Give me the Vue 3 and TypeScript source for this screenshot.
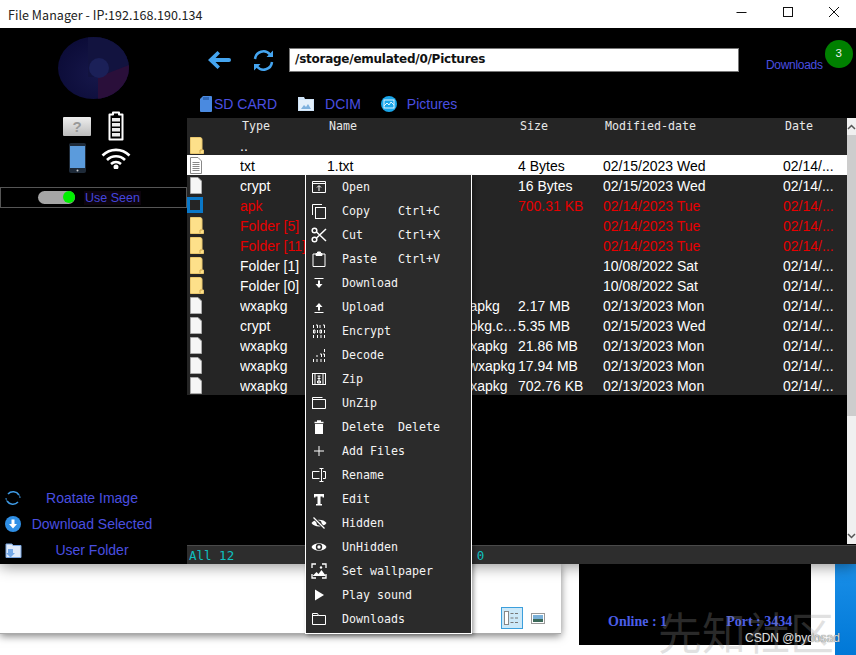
<script setup lang="ts">
interface Row { type: string; name: string; size: string; mod: string; icon: string; red?: boolean; sel?: boolean }
const rows: Row[] = [
  { type: '..', name: '', size: '', mod: '', icon: 'folder' },
  { type: 'txt', name: '1.txt', size: '4 Bytes', mod: '02/15/2023 Wed', icon: 'text', sel: true },
  { type: 'crypt', name: '1.txt.crypt', size: '16 Bytes', mod: '02/15/2023 Wed', icon: 'file' },
  { type: 'apk', name: 'base.apk', size: '700.31 KB', mod: '02/14/2023 Tue', icon: 'apk', red: true },
  { type: 'Folder [5]', name: 'wxapkg', size: '', mod: '02/14/2023 Tue', icon: 'folder', red: true },
  { type: 'Folder [11]', name: 'crypt', size: '', mod: '02/14/2023 Tue', icon: 'folder', red: true },
  { type: 'Folder [1]', name: 'Camera', size: '', mod: '10/08/2022 Sat', icon: 'folder' },
  { type: 'Folder [0]', name: 'Screenshots', size: '', mod: '10/08/2022 Sat', icon: 'folder' },
  { type: 'wxapkg', name: '_-18539298320_19.wxapkg', size: '2.17 MB', mod: '02/13/2023 Mon', icon: 'file' },
  { type: 'crypt', name: '_-1853929832_19.wxapkg.crypt', size: '5.35 MB', mod: '02/15/2023 Wed', icon: 'file' },
  { type: 'wxapkg', name: '_-185392983212_19.wxapkg', size: '21.86 MB', mod: '02/13/2023 Mon', icon: 'file' },
  { type: 'wxapkg', name: '_-1853929832123_19.wxapkg', size: '17.94 MB', mod: '02/13/2023 Mon', icon: 'file' },
  { type: 'wxapkg', name: '_-185392983245_19.wxapkg', size: '702.76 KB', mod: '02/13/2023 Mon', icon: 'file' },
]
const menu: { label: string; key?: string; icon: string }[] = [
  { label: 'Open', icon: 'open' },
  { label: 'Copy', key: 'Ctrl+C', icon: 'copy' },
  { label: 'Cut', key: 'Ctrl+X', icon: 'cut' },
  { label: 'Paste', key: 'Ctrl+V', icon: 'paste' },
  { label: 'Download', icon: 'download' },
  { label: 'Upload', icon: 'upload' },
  { label: 'Encrypt', icon: 'encrypt' },
  { label: 'Decode', icon: 'decode' },
  { label: 'Zip', icon: 'zip' },
  { label: 'UnZip', icon: 'unzip' },
  { label: 'Delete', key: 'Delete', icon: 'delete' },
  { label: 'Add Files', icon: 'add' },
  { label: 'Rename', icon: 'rename' },
  { label: 'Edit', icon: 'edit' },
  { label: 'Hidden', icon: 'hidden' },
  { label: 'UnHidden', icon: 'unhidden' },
  { label: 'Set wallpaper', icon: 'wallpaper' },
  { label: 'Play sound', icon: 'play' },
  { label: 'Downloads', icon: 'folderOutline' },
]
</script>

<template>
  <div class="desk">
    <div class="window">
      <div class="titlebar">
        <span class="title">File Manager - IP:192.168.190.134</span>
        <div class="controls">
          <svg width="46" height="28" viewBox="0 0 46 28"><path d="M17.500 12.500h10" stroke="#111" fill="none" /></svg>
          <svg width="46" height="28" viewBox="0 0 46 28"><rect x="18.500" y="7.500" width="9" height="9" stroke="#111" fill="none" /></svg>
          <svg width="46" height="28" viewBox="0 0 46 28"><path d="M18 7l10 10M28 7l-10 10" stroke="#111" fill="none" /></svg>
        </div>
      </div>
      <div class="body">
        <aside class="side">
          <svg class="logo" width="71" height="62" viewBox="0 0 71 62">
            <defs>
              <radialGradient id="lg" cx="0.55" cy="0.6" r="0.6"><stop offset="0" stop-color="#16174a" /><stop offset="1" stop-color="#0c0c38" /></radialGradient>
              <clipPath id="lc"><ellipse cx="35.500" cy="31" rx="35.500" ry="31" /></clipPath>
            </defs>
            <ellipse cx="35.500" cy="31" rx="35.500" ry="31" fill="url(#lg)" />
            <g clip-path="url(#lc)">
              <path d="M30 0h41v30L40 40H30z" fill="#12133f" />
              <path d="M40 40l31-12v34H40z" fill="#2a0f3a" />
              <circle cx="41" cy="31" r="10" fill="#1b2058" />
            </g>
          </svg>
          <div class="status-icons">
            <svg width="28" height="19" viewBox="0 0 28 19"><defs><linearGradient id="q" x1="0" y1="0" x2="0" y2="1"><stop offset="0" stop-color="#eee" /><stop offset="1" stop-color="#bbb" /></linearGradient></defs><rect width="28" height="19" rx="1" fill="url(#q)" /><text x="14" y="15" class="q">?</text></svg>
            <svg width="16" height="30" viewBox="0 0 16 30"><path d="M5 1.500h6v2h3.500v25h-13v-25H5z" fill="#000" stroke="#fff" stroke-width="2" stroke-linejoin="round" /><path d="M4 7h8v3.500H4zM4 12h8v3.500H4zM4 17h8v3.500H4zM4 22h8v3.500H4z" fill="#eee" /></svg>
            <svg width="17" height="30" viewBox="0 0 17 30"><rect width="17" height="30" rx="2" fill="#1e2a38" /><rect x="1" y="3" width="15" height="22" fill="#5b9bdc" /><circle cx="8.500" cy="27.500" r="1" fill="#ccc" /></svg>
            <svg width="30" height="22" viewBox="0 0 30 22" fill="none" stroke="#fff" stroke-width="2.600"><path d="M1.500 8.500C9 1 21 1 28.500 8.500" /><path d="M6 13C11 8 19 8 24 13" /><path d="M10 17c3-2.500 7-2.500 10 0" /><circle cx="15" cy="20" r="1.200" fill="#fff" /></svg>
          </div>
          <div class="seen">
            <span class="toggle"><i></i></span>
            <span class="seen-label">Use Seen</span>
          </div>
          <div class="side-links">
            <a class="side-link">
              <svg width="16" height="16" viewBox="0 0 16 16" fill="none" stroke="#3f9be6" stroke-width="1.600"><path d="M3 4A7 7 0 0 1 14 5M13 12A7 7 0 0 1 2 11" /><path d="M1 8a7 7 0 0 0 .500 2.500M15 8a7 7 0 0 0-.500-2.500" stroke-width="1" /></svg>
              <span>Roatate Image</span>
            </a>
            <a class="side-link">
              <svg width="16" height="16" viewBox="0 0 16 16"><circle cx="8" cy="8" r="8" fill="#2f8fe6" /><path d="M6.500 3.500h3V8H12l-4 4.500L4 8h2.500z" fill="#fff" /></svg>
              <span>Download Selected</span>
            </a>
            <a class="side-link">
              <svg width="17" height="16" viewBox="0 0 17 16"><path d="M1 2h6l1 1.500h8v12H1z" fill="#dfeafa" stroke="#7aa6e0" /><path d="M3 7h5v4h2l-4.500 4.500L1 11h2z" fill="#74a9e8" /></svg>
              <span>User Folder</span>
            </a>
          </div>
        </aside>
        <main class="main">
          <div class="toolbar">
            <svg class="back" width="24" height="20" viewBox="0 0 24 20"><path d="M10.500 1L1 10l9.500 9 2.500-2.500-4.500-4.500H22a2 2 0 0 0 0-4H8.500L13 3.500z" fill="#45a5f0" /></svg>
            <svg class="refresh" width="23" height="23" viewBox="0 0 23 23" fill="none" stroke="#45a5f0" stroke-width="2.500"><path d="M3 10A8.500 8.500 0 0 1 18 5.500" /><path d="M20 13A8.500 8.500 0 0 1 5 17.500" /><path d="M21 1.500V8h-6.500zM2 21.500V15h6.500z" fill="#45a5f0" stroke="none" /></svg>
            <div class="path">/storage/emulated/0/Pictures</div>
            <div class="dl">
              <a class="dl-link">Downloads</a>
              <span class="badge">3</span>
            </div>
          </div>
          <nav class="crumbs">
            <a class="crumb c1">
              <svg width="12" height="16" viewBox="0 0 12 16"><path d="M3 0h8a1 1 0 0 1 1 1v14a1 1 0 0 1-1 1H1a1 1 0 0 1-1-1V3z" fill="#4a8ae0" /><path d="M3 1h6v3H3z" fill="#2f68b8" /></svg>
              <span>SD CARD</span>
            </a>
            <a class="crumb c2">
              <svg width="16" height="14" viewBox="0 0 16 14"><path d="M0 0h6l1 2h9v12H0z" fill="#cfe3f7" /><path d="M1 3h14v10H1z" fill="#e4f0fb" /><path d="M3 12l3-4 2 2 2-3 3 5z" fill="#7eb1de" /></svg>
              <span>DCIM</span>
            </a>
            <a class="crumb c3">
              <svg width="16" height="16" viewBox="0 0 16 16"><circle cx="8" cy="8" r="8" fill="#19a6ea" /><rect x="3" y="4" width="10" height="8" fill="none" stroke="#dff4ff" /><path d="M3 10l3-3 2 2 2-3 3 3" fill="none" stroke="#dff4ff" /></svg>
              <span>Pictures</span>
            </a>
          </nav>
          <div class="content">
            <div class="list">
              <div class="table">
                <div class="thead">
                  <span class="c-icon"></span>
                  <span class="c-type">Type</span>
                  <span class="c-name">Name</span>
                  <span class="c-size">Size</span>
                  <span class="c-mod">Modified-date</span>
                  <span class="c-date">Date</span>
                </div>
                <div v-for="(r, i) in rows" :key="i" class="row" :class="{ red: r.red, sel: r.sel }">
                  <span class="c-icon">
                    <svg v-if="r.icon === 'folder'" width="14" height="17" viewBox="0 0 14 17"><path d="M0.500 0.500h9.500a2 2 0 0 1 2 2v10.500h1.500v3.500H0.500z" fill="#fde08a" stroke="#e9c76e" /><path d="M10 16v-3h2" fill="none" stroke="#cfa84e" /></svg>
                    <svg v-else-if="r.icon === 'file'" width="12" height="17" viewBox="0 0 12 17"><path d="M0.500 0.500h7.500l3.500 3.500v12.500H0.500z" fill="#f6f6f6" stroke="#aaa" /></svg>
                    <svg v-else-if="r.icon === 'text'" width="12" height="17" viewBox="0 0 12 17"><path d="M0.500 0.500h7.500l3.500 3.500v12.500H0.500z" fill="#fff" stroke="#888" /><path d="M2.500 5.500h7M2.500 7.500h7M2.500 9.500h7M2.500 11.500h7M2.500 13.500h7" stroke="#888" fill="none" /></svg>
                    <span v-else class="apk-box"></span>
                  </span>
                  <span class="c-type">{{ r.type }}</span>
                  <span class="c-name">{{ r.name }}</span>
                  <span class="c-size">{{ r.size }}</span>
                  <span class="c-mod">{{ r.mod }}</span>
                  <span class="c-date">{{ i === 0 ? '' : '02/14/...' }}</span>
                </div>
              </div>
              <div class="scrollbar">
                <span class="sb-btn"><svg width="9" height="6" viewBox="0 0 9 6"><path d="M1 5l3.500-3.500L8 5" fill="none" stroke="#555" stroke-width="1.500" /></svg></span>
                <span class="sb-thumb"></span>
                <span class="sb-track"></span>
                <span class="sb-btn"><svg width="9" height="6" viewBox="0 0 9 6"><path d="M1 1l3.500 3.500L8 1" fill="none" stroke="#555" stroke-width="1.500" /></svg></span>
              </div>
            </div>
            <div class="statusbar"><span>All 12</span><span class="hid">Hidden 0</span></div>
          </div>
        </main>
      </div>
    </div>

    <div class="under">
      <div class="card">
        <span class="v-btn on"><svg width="16" height="14" viewBox="0 0 16 14"><rect x="0.500" y="0.500" width="4" height="13" fill="#fff" stroke="#888" /><path d="M6.500 2.500h3M11 2.500h3M6.500 7h3M11 7h3M6.500 11.500h3M11 11.500h3" stroke="#777" fill="none" /></svg></span>
        <span class="v-btn"><svg width="14" height="11" viewBox="0 0 14 11"><rect x="0.500" y="0.500" width="13" height="10" fill="#fff" stroke="#999" /><rect x="2" y="2" width="10" height="4" fill="#7ab0d8" /><rect x="2" y="6" width="10" height="3" fill="#3c6a5a" /></svg></span>
      </div>
      <div class="term">
        <span>Online : 1</span>
        <span>Port : 3434</span>
      </div>
      <div class="blue"></div>
    </div>

    <div class="ctx">
      <div v-for="m in menu" :key="m.label" class="ctx-row">
        <svg class="mi" width="16" height="16" viewBox="0 0 16 16" fill="none" stroke="#fff">
          <template v-if="m.icon === 'open'"><path d="M1.500 2.500h13v11h-13zM1.500 4.500h13" /><path d="M8 12V7M6 8.500l2-2 2 2" /></template>
          <template v-else-if="m.icon === 'copy'"><path d="M1.500 12V1.500H11" /><rect x="4.500" y="4.500" width="10" height="11" /></template>
          <template v-else-if="m.icon === 'cut'"><circle cx="3.500" cy="3.500" r="2.300" stroke-width="1.500" /><circle cx="3.500" cy="12.500" r="2.300" stroke-width="1.500" /><path d="M5.500 5L15 14M5.500 11L15 2" stroke-width="1.500" /></template>
          <template v-else-if="m.icon === 'paste'"><path d="M5 3H2v12.500h12V3h-3" /><path d="M5 4.500h6V2.500H9.500V1h-3v1.500H5z" fill="#fff" /></template>
          <template v-else-if="m.icon === 'download'"><path d="M4 3.500h9" transform="translate(-.5 0)" /><path d="M7 5.500h2V9h2.500L8 13 4.500 9H7z" fill="#fff" stroke="none" /></template>
          <template v-else-if="m.icon === 'upload'"><path d="M3.500 13.500h9" /><path d="M7 11.500h2V8h2.500L8 4 4.500 8H7z" fill="#fff" stroke="none" /></template>
          <template v-else-if="m.icon === 'encrypt'"><path d="M2.500 2v3M5 2h1.500v3M9 2v3M12 2h1.500v3M2.500 7h1.500v3H2.500zM6.500 7v3M9 7h1.500v3H9zM13.500 7v3M2.500 12v3M6.500 12v3M10 12v3M13.500 12v3" /></template>
          <template v-else-if="m.icon === 'decode'"><path d="M9 7h1.500v3M13.500 2v3M12 7h1.500v3M2.500 12v3M6 12v3M10 12v3M13.500 12v3M6 8v2" /></template>
          <template v-else-if="m.icon === 'zip'"><rect x="1.500" y="2.500" width="13" height="11" /><path d="M4 2.500v11M12 2.500v11" /><path d="M6.500 5h3M6.500 7.500h3M8 5v7M6.500 10h3v2h-3z" /></template>
          <template v-else-if="m.icon === 'unzip'"><path d="M1.500 14V2.500h10" /><path d="M1.500 4.500h13v9h-13z" /></template>
          <template v-else-if="m.icon === 'delete'"><path d="M4 5h8v10H4z" fill="#fff" stroke="none" /><path d="M3.500 3.500h9M6 2h4" stroke-width="1.500" /></template>
          <template v-else-if="m.icon === 'add'"><path d="M8 3v10M3 8h10" /></template>
          <template v-else-if="m.icon === 'rename'"><path d="M8.500 4.500h-7v7h7M12 4.500h2.500v7H12" /><path d="M10.500 2v12M8.500 1.500h4M8.500 14.500h4" /></template>
          <template v-else-if="m.icon === 'edit'"><path d="M3 3h10v3.500h-1.500V5.500H9.500v7.500h1.500v1.500H5V13h1.500V5.500H4.500v1H3z" fill="#fff" stroke="none" /></template>
          <template v-else-if="m.icon === 'hidden'"><path d="M0.500 8C3 3.500 13 3.500 15.500 8 13 12.500 3 12.500 0.500 8z" fill="#fff" stroke="none" /><circle cx="8" cy="8" r="2.500" fill="#2b2b2b" stroke="none" /><path d="M2 2l12 12" stroke="#2b2b2b" stroke-width="3" /><path d="M2.500 2.500l11 11" stroke-width="1.300" /></template>
          <template v-else-if="m.icon === 'unhidden'"><path d="M0.500 8C3 3 13 3 15.500 8 13 13 3 13 0.500 8z" fill="#fff" stroke="none" /><circle cx="8" cy="8" r="3.200" fill="#2b2b2b" stroke="none" /><circle cx="8" cy="8" r="1.700" fill="#fff" stroke="none" /></template>
          <template v-else-if="m.icon === 'wallpaper'"><path d="M1 5V1h4M11 1h4v4M15 11v4h-4M5 15H1v-4" stroke-width="1.300" /><path d="M1.500 13l4-4 2 2 3-4 4.500 6z" fill="#fff" stroke="none" /><circle cx="10" cy="4.500" r="1.200" fill="#fff" stroke="none" /></template>
          <template v-else-if="m.icon === 'play'"><path d="M4 2.500l9 5.500-9 5.500z" fill="#fff" stroke="none" /></template>
          <template v-else><path d="M1.500 13.500V2.500h5l1 2h7v9z" /><path d="M1.500 4.500h6" /></template>
        </svg>
        <span class="ml">{{ m.label }}</span>
        <span class="mk">{{ m.key }}</span>
      </div>
    </div>

    <div class="wm">先知社区</div>
    <div class="csdn">CSDN @bydosad</div>
  </div>
</template>

<style>
html, body { margin: 0; background: #fff; overflow: hidden; }
</style>

<style scoped>
.desk { position: relative; width: 856px; height: 655px; overflow: hidden; background: #fff; font-family: "Liberation Sans", Arial, sans-serif; }
.window { height: 564px; display: flex; flex-direction: column; box-shadow: 0 2px 14px rgba(0,0,0,.45); position: relative; z-index: 2; }
.titlebar { height: 28px; flex: none; background: #fff; display: flex; align-items: center; justify-content: space-between; }
.title { margin-left: 8px; font: 12.5px "Noto Sans CJK SC", "Noto Sans", sans-serif; color: #222; letter-spacing: .05px; }
.controls { display: flex; height: 28px; margin-right: -1px; }
.controls svg { display: block; }
.body { flex: 1; min-height: 0; display: flex; background: #000; }
.side { width: 187px; flex: none; display: flex; flex-direction: column; align-items: center; }
.logo { margin-top: 9px; display: block; }
.status-icons { display: grid; grid-template-columns: 42px 30px; justify-items: center; align-items: center; column-gap: 3px; row-gap: 2px; margin-top: 12px; height: 62px; }
.q { font: bold 15px "Liberation Sans", sans-serif; fill: #999; text-anchor: middle; }
.seen { box-sizing: border-box; width: 187px; height: 21px; margin-top: 14px; border: 1px solid #555; display: flex; align-items: center; position: relative; }
.toggle { position: relative; margin-left: 37px; width: 37px; height: 13px; border-radius: 7px; background: #a5a5a5; }
.toggle i { position: absolute; right: 0; top: 0; width: 12px; height: 12px; border-radius: 50%; background: #00f000; }
.seen-label { margin-left: 9px; font-size: 12.500px; color: #4444dd; background: #0d040d; padding: 0 1px; }
.side-links { margin-top: auto; width: 187px; display: flex; flex-direction: column; padding-bottom: 1px; }
.side-link { position: relative; height: 26px; line-height: 26px; text-align: center; font-size: 14px; color: #4a4fe0; padding-right: 3px; }
.side-link svg { position: absolute; left: 5px; top: 5px; }
.main { flex: 1; min-width: 0; display: flex; flex-direction: column; }
.toolbar { height: 61px; display: flex; align-items: flex-start; }
.back { margin: 22px 0 0 20px; flex: none; }
.refresh { margin: 21px 0 0 21px; flex: none; }
.path { box-sizing: border-box; margin: 20px 0 0 14px; width: 450px; height: 24px; background: #fff; border: 1px solid #777; padding: 0 0 0 5px; font: bold 12px/20px "DejaVu Sans", sans-serif; color: #111; letter-spacing: -.25px; }
.dl { display: flex; margin-left: 27px; position: relative; }
.dl-link { margin-top: 30px; font-size: 12px; letter-spacing: -.3px; color: #4a4fe0; line-height: 14px; }
.badge { margin: 12px 0 0 2px; width: 28px; height: 28px; border-radius: 50%; background: #008000; color: #eee; font-size: 11.500px; line-height: 26px; text-align: center; }
.crumbs { height: 29px; display: flex; align-items: center; color: #4a4fe0; font-size: 14px; }
.crumb { display: flex; align-items: center; }
.c1 { margin-left: 13px; gap: 2px; }
.c2 { margin-left: 21px; gap: 11px; }
.c3 { margin-left: 20px; gap: 10px; }
.content { flex: 1; min-height: 0; display: flex; flex-direction: column; }
.list { flex: 1; min-height: 0; display: flex; }
.table { width: 660px; flex: none; color: #fff; font-size: 14px; }
.thead, .row { display: grid; grid-template-columns: 53px 87px 191px 85px 180px 64px; white-space: nowrap; }
.thead { height: 17px; background: #252525; font: 11.630px/17px "DejaVu Sans Mono", monospace; color: #e8e8e8; }
.thead span { padding-left: 2px; }
.row { height: 20px; line-height: 22px; background: #252525; }
.row.red { color: #e60000; }
.row.sel { background: #fff; color: #000; }
.row > span { overflow: hidden; text-overflow: ellipsis; }
.row .c-icon { display: flex; padding-left: 3px; align-items: flex-start; padding-top: 2px; overflow: visible; }
.row .c-icon svg { display: block; }
.apk-box { box-sizing: border-box; display: block; width: 16px; height: 16px; margin-left: -3px; border: 3px solid #0a78c8; }
.scrollbar { width: 9px; flex: 1; display: flex; flex-direction: column; background: #f0f0f0; }
.sb-btn { height: 17px; display: flex; align-items: center; justify-content: center; flex: none; background: #f0f0f0; }
.sb-thumb { height: 281px; background: #cdcdcd; flex: none; }
.sb-track { flex: 1; }
.statusbar { height: 19px; margin-top: 1px; border-top: 1px solid #4a4a4a; box-sizing: border-box; background: #2d2d2d; color: #0fc0c0; font: 12.500px/19px "DejaVu Sans Mono", monospace; padding-left: 2px; display: flex; }
.hid { position: absolute; left: 424px; }
.under { height: 91px; display: flex; position: relative; }
.card { box-sizing: border-box; width: 561px; height: 70px; flex: none; background: #fff; box-shadow: 0 2px 8px rgba(0,0,0,.5); display: flex; justify-content: flex-end; align-items: flex-end; padding: 0 12px 4px 0; gap: 4px; border-bottom: 1px solid #aaa; }
.v-btn { width: 22px; height: 22px; display: flex; align-items: center; justify-content: center; box-sizing: border-box; }
.v-btn.on { background: #cce8f8; border: 1px solid #3c9fdc; }
.term { margin-left: 18px; width: 232px; height: 81px; background: #000; flex: none; display: flex; color: #4a5de8; font: bold 14px "Liberation Serif", serif; padding-top: 50px; box-sizing: border-box; gap: 59px; padding-left: 29px; }
.blue { position: absolute; left: 835px; top: 0; width: 21px; height: 91px; background: linear-gradient(#1a8fe8, #0078d7); }
.ctx { position: absolute; z-index: 5; left: 305px; top: 175px; width: 167px; box-sizing: border-box; background: #2b2b2b; border: 1px solid #fff; border-top: 0; padding-bottom: 2px; box-shadow: 2px 2px 4px rgba(0,0,0,.35); color: #f4f4f4; font: 11.630px "DejaVu Sans Mono", monospace; }
.ctx-row { height: 24px; display: flex; align-items: center; padding-left: 5px; white-space: pre; }
.mi { flex: none; width: 16px; height: 16px; }
.ml { margin-left: 15px; width: 56px; }
.mk { margin-left: 0; }
.wm { position: absolute; z-index: 6; left: 658px; top: 599px; font: 44px "Noto Sans CJK SC", sans-serif; letter-spacing: 0; color: rgba(150,150,150,.28); white-space: nowrap; pointer-events: none; }
.csdn { position: absolute; z-index: 7; left: 745px; top: 631px; font-size: 12px; color: #ddd; text-shadow: 0 0 1px #333; white-space: nowrap; }
</style>
